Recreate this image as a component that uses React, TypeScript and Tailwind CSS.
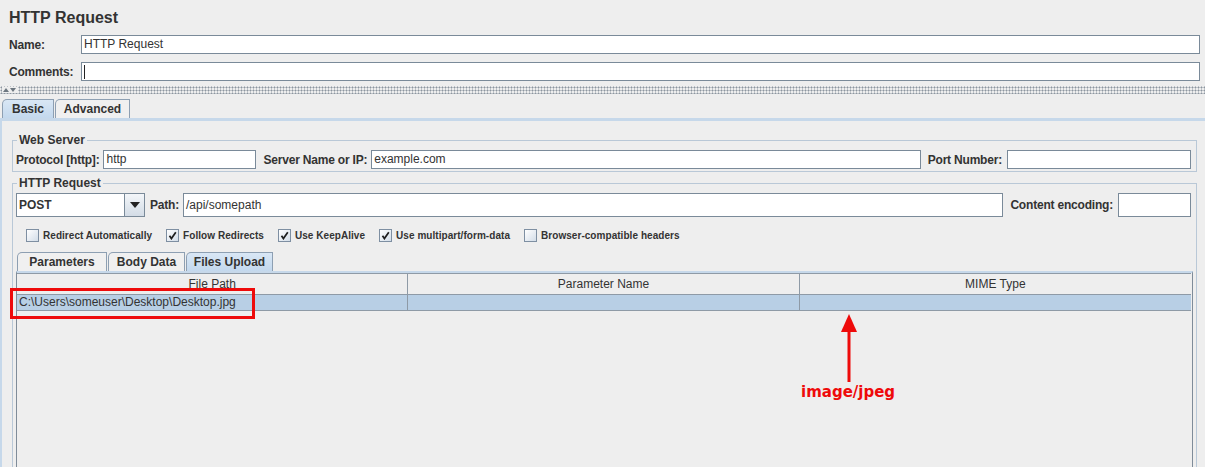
import React from "react";

const Field = ({ value, className = "", children }: { value?: string; className?: string; children?: React.ReactNode }) => (
  <div className={`h-[19px] bg-white border border-[#7a8a99] px-[2px] leading-[17px] whitespace-nowrap overflow-hidden ${className}`}>
    {value}
    {children}
  </div>
);

const Label = ({ text, className = "" }: { text: string; className?: string }) => (
  <span className={`font-bold tracking-[-0.2px] whitespace-nowrap ${className}`}>{text}</span>
);

const Check = ({ label, checked }: { label: string; checked?: boolean }) => (
  <div className="flex items-center gap-[4px]">
    <span className="w-[13px] h-[13px] border border-[#7e8fa2] bg-linear-to-br from-white to-[#d3dde8] flex items-center justify-center">
      {checked && (
        <svg width="9" height="9" viewBox="0 0 9 9">
          <path d="M1.5 4.8 L3.4 7.6 L7.8 1.2" stroke="#1e1e1e" strokeWidth="1.7" fill="none" />
        </svg>
      )}
    </span>
    <span className="text-[10px] font-bold tracking-[0.05px]">{label}</span>
  </div>
);

const Tab = ({ label, active, className = "" }: { label: string; active?: boolean; className?: string }) => (
  <div
    className={`h-[19px] border border-b-0 border-[#8d9fb2] rounded-tl-[5px] font-bold leading-[18px] text-center ${
      active ? "bg-linear-to-b from-[#d9e7f5] to-[#c3d8ed]" : "bg-[#f0f0f0]"
    } ${className}`}
  >
    {label}
  </div>
);

export default function App() {
  return (
    <div className="relative w-[1205px] h-[467px] overflow-hidden bg-[#eeeeee] font-['Liberation_Sans',Arial,sans-serif] text-[12px] text-[#333]">
      {/* name / comments */}
      <div className="pl-[9px] pr-[5px] pt-[8px]">
        <h1 className="h-[27px] text-[16px] font-bold leading-[20px]">HTTP Request</h1>
        <div className="flex items-center">
          <Label text="Name:" className="w-[72px]" />
          <Field value="HTTP Request" className="flex-1" />
        </div>
        <div className="flex items-center mt-[8px]">
          <Label text="Comments:" className="w-[72px]" />
          <Field className="flex-1">
            <span className="inline-block w-px h-[14px] bg-[#222] align-middle" />
          </Field>
        </div>
      </div>

      {/* split divider */}
      <div className="flex items-center h-[8px] mt-[5px] bg-[radial-gradient(circle,#8c959f_0.8px,transparent_1.2px)] bg-[length:3px_3px]">
        <svg width="16" height="6" viewBox="0 0 16 6" className="ml-[2px] bg-[#eeeeee]">
          <path d="M1 5 L4 1 L7 5z" fill="#6d7780" />
          <path d="M8 1 L14 1 L11 5z" fill="#6d7780" />
        </svg>
      </div>

      {/* top tabs */}
      <div className="flex items-end gap-[1px] pl-[2px] mt-[5px]">
        <Tab label="Basic" active className="w-[52px]" />
        <Tab label="Advanced" className="w-[75px]" />
      </div>

      <div className="h-[600px] border-t-[3px] border-l-2 border-[#c6d8ea] pl-[10px] pr-[8px] pt-[12px]">
        <fieldset className="border border-[#b9c8d7] px-[3px] pb-[2px]">
          <legend className="ml-[1px] px-[2px] font-bold leading-[14px]">Web Server</legend>
          <div className="flex items-center mt-[3px] mr-[2px]">
            <Label text="Protocol [http]:" />
            <Field value="http" className="w-[153px] ml-[4px]" />
            <Label text="Server Name or IP:" className="ml-[7px]" />
            <Field value="example.com" className="flex-1 ml-[4px]" />
            <Label text="Port Number:" className="ml-[7px]" />
            <Field className="w-[184px] ml-[5px]" />
          </div>
        </fieldset>

        <fieldset className="border border-[#b9c8d7] px-[3px] mt-[4px]">
          <legend className="ml-[1px] px-[2px] font-bold leading-[14px]">HTTP Request</legend>
          <div className="flex items-center mt-[3px] mr-[2px]">
            <div className="flex w-[129px] h-[24px] bg-white border border-[#7a8a99]">
              <span className="flex-1 pl-[2px] font-bold leading-[22px]">POST</span>
              <span className="w-[20px] border-l border-[#7a8a99] bg-linear-to-b from-[#f3f6f9] to-[#d3dce6] flex items-center justify-center">
                <svg width="10" height="6" viewBox="0 0 10 6">
                  <path d="M0 0 H10 L5 6z" fill="#222" />
                </svg>
              </span>
            </div>
            <Label text="Path:" className="ml-[5px]" />
            <Field value="/api/somepath" className="flex-1 ml-[4px] h-[24px] leading-[22px]" />
            <Label text="Content encoding:" className="ml-[7px]" />
            <Field className="w-[73px] ml-[5px] h-[24px]" />
          </div>

          <div className="flex items-center gap-[14px] pl-[10px] mt-[11px] h-[14px]">
            <Check label="Redirect Automatically" />
            <Check label="Follow Redirects" checked />
            <Check label="Use KeepAlive" checked />
            <Check label="Use multipart/form-data" checked />
            <Check label="Browser-compatible headers" />
          </div>

          {/* sub tabs */}
          <div className="flex items-end gap-[1px] ml-[1px] mt-[10px]">
            <Tab label="Parameters" className="w-[90px]" />
            <Tab label="Body Data" className="w-[77px]" />
            <Tab label="Files Upload" active className="w-[87px]" />
          </div>

          <div className="h-[220px] border border-[#7f8c99] border-t-[#c6d8ea] border-t-2 pr-[1px]">
            <div className="grid grid-cols-3 h-[22px] border-y border-[#8e9aa6] bg-[#eeeeee]">
              <div className="border-r border-[#8e9aa6] text-center leading-[20px]">File Path</div>
              <div className="border-r border-[#8e9aa6] text-center leading-[20px]">Parameter Name</div>
              <div className="text-center leading-[20px]">MIME Type</div>
            </div>
            <div className="grid grid-cols-3 h-[16px] border-b border-[#8e9aa6] bg-[#b8cfe5]">
              <div className="border-r border-[#8e9aa6] pl-[2px] leading-[15px] whitespace-nowrap">C:\Users\someuser\Desktop\Desktop.jpg</div>
              <div className="border-r border-[#8e9aa6]" />
              <div />
            </div>
          </div>
        </fieldset>
      </div>

      {/* annotations */}
      <div className="absolute left-[10px] top-[288px] w-[245px] h-[31px] border-[3px] border-[#ee0a0a]" />
      <svg className="absolute left-[840px] top-[314px]" width="18" height="70" viewBox="0 0 18 70">
        <path d="M9 0 L1 18 L17 18z" fill="#ee0a0a" />
        <rect x="7.5" y="17" width="3" height="51" fill="#ee0a0a" />
      </svg>
      <div className="absolute left-[801px] top-[382px] font-['DejaVu_Sans',Verdana,sans-serif] text-[15px] font-bold leading-[20px] text-[#ee0a0a]">
        image/jpeg
      </div>
    </div>
  );
}
